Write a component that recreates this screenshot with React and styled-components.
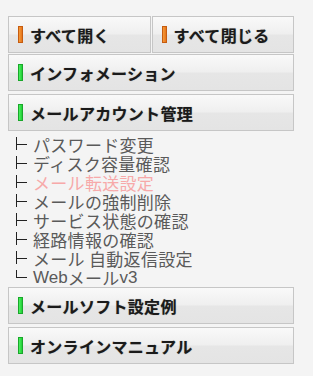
import React from 'react'
import styled, { createGlobalStyle } from 'styled-components'

const GlobalStyle = createGlobalStyle`
  html, body {
    margin: 0;
    padding: 0;
    background: #f4f4f4;
  }
`

const Menu = styled.div`
  width: 286px;
  padding: 16px 0 0 8px;
  font-family: "Noto Sans CJK JP", "Noto Sans", sans-serif;
`

const TopRow = styled.div`
  display: grid;
  grid-template-columns: 1fr 1fr;
  gap: 1px;
`

const Box = styled.div`
  box-sizing: border-box;
  height: 37px;
  margin-top: ${p => p.gap || 0}px;
  display: flex;
  align-items: center;
  gap: 7px;
  padding-left: 9px;
  border: 1px solid #c6c6c6;
  background: linear-gradient(
    to bottom,
    #f9f9f9 0%,
    #efefef 48%,
    #e6e6e6 52%,
    #e4e4e4 100%
  );
  color: #1a1a1a;
  font-size: 16px;
  line-height: 20px;
  font-weight: 700;
  letter-spacing: 0.3px;
  text-shadow: 0 0 1px rgba(0, 0, 0, 0.4);
  cursor: pointer;
`

const Marker = styled.span`
  box-sizing: border-box;
  width: 5px;
  height: 17px;
  flex: none;
  border: 1px solid ${p => (p.orange ? '#c65c10' : '#18a82a')};
  background: ${p =>
    p.orange
      ? 'linear-gradient(to right, #f59a3a, #e6761a)'
      : 'linear-gradient(to right, #4cf060, #22d036)'};
`

const Tree = styled.ul`
  list-style: none;
  margin: 0;
  padding: 4px 0 0 8px;
`

const Item = styled.li`
  display: flex;
  align-items: center;
  height: 19px;
  line-height: 19px;
  color: ${p => (p.active ? '#f7a9a9' : '#5a5a5a')};
  font-size: 17px;
  font-weight: 400;
  letter-spacing: 0.3px;
  white-space: nowrap;
`

const Branch = styled.span`
  position: relative;
  width: 11px;
  height: 19px;
  flex: none;
  margin-right: 6px;

  &::before {
    content: '';
    position: absolute;
    left: 0;
    top: 2px;
    width: 1px;
    height: ${p => (p.last ? 8 : 13)}px;
    background: #222;
  }

  &::after {
    content: '';
    position: absolute;
    left: 0;
    top: 9px;
    width: 11px;
    height: 1px;
    background: #222;
  }
`

const Latin = styled.span`
  font-family: "Liberation Sans", "Noto Sans CJK JP", sans-serif;
  letter-spacing: 0;
`

const items = [
  { label: 'パスワード変更' },
  { label: 'ディスク容量確認' },
  { label: 'メール転送設定', active: true },
  { label: 'メールの強制削除' },
  { label: 'サービス状態の確認' },
  { label: '経路情報の確認' },
  { label: 'メール 自動返信設定' },
]

export default function App() {
  return (
    <>
      <GlobalStyle />
      <Menu>
        <TopRow>
          <Box>
            <Marker orange />
            すべて開く
          </Box>
          <Box>
            <Marker orange />
            すべて閉じる
          </Box>
        </TopRow>
        <Box gap={1}>
          <Marker />
          インフォメーション
        </Box>
        <Box gap={3}>
          <Marker />
          メールアカウント管理
        </Box>
        <Tree>
          {items.map((it, i) => (
            <Item key={i} active={it.active}>
              <Branch />
              {it.label}
            </Item>
          ))}
          <Item>
            <Branch last />
            <Latin>Web</Latin>メール<Latin>v3</Latin>
          </Item>
        </Tree>
        <Box>
          <Marker />
          メールソフト設定例
        </Box>
        <Box gap={3}>
          <Marker />
          オンラインマニュアル
        </Box>
      </Menu>
    </>
  )
}
